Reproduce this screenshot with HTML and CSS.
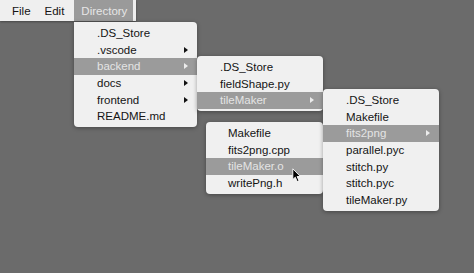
FILE: index.html
```html
<!DOCTYPE html>
<html>
<head>
<meta charset="utf-8">
<link rel="stylesheet" href="styles.css">
</head>
<body>
<div class="desk">
  <nav class="menubar">
    <div class="mb-item">File</div>
    <div class="mb-item">Edit</div>
    <div class="mb-item mb-active">Directory</div>
  </nav>

  <ul class="menu m1">
    <li class="item">.DS_Store</li>
    <li class="item sub">.vscode</li>
    <li class="item sub sel">backend</li>
    <li class="item sub">docs</li>
    <li class="item sub">frontend</li>
    <li class="item">README.md</li>
  </ul>

  <ul class="menu m2">
    <li class="item">.DS_Store</li>
    <li class="item">fieldShape.py</li>
    <li class="item sub sel">tileMaker</li>
  </ul>

  <ul class="menu m4">
    <li class="item">Makefile</li>
    <li class="item">fits2png.cpp</li>
    <li class="item sel">tileMaker.o</li>
    <li class="item">writePng.h</li>
  </ul>

  <ul class="menu m3">
    <li class="item">.DS_Store</li>
    <li class="item">Makefile</li>
    <li class="item sub sel">fits2png</li>
    <li class="item">parallel.pyc</li>
    <li class="item">stitch.py</li>
    <li class="item">stitch.pyc</li>
    <li class="item">tileMaker.py</li>
  </ul>

  <svg class="cursor" width="10" height="15" viewBox="0 0 10 15">
    <path d="M0.8 0.8 L0.8 11.5 L3.3 9.2 L5.2 13.6 L7 12.8 L5.1 8.5 L8.4 8.5 Z" fill="#000" stroke="#fff" stroke-width="0.9" stroke-linejoin="round"/>
  </svg>
</div>
</body>
</html>
```

FILE: styles.css
```css
* { box-sizing: border-box; }
html, body {
  margin: 0;
  padding: 0;
  background: #6b6b6b;
}
body {
  width: 474px;
  height: 273px;
  overflow: hidden;
  font-family: "Liberation Sans", Arial, sans-serif;
  font-size: 11.5px;
  color: #141414;
}
.desk {
  position: relative;
  width: 474px;
  height: 273px;
}
.menubar {
  display: flex;
  width: 136px;
  height: 21px;
  padding: 0 3px 0 5px;
  background: #efefef;
  box-shadow: 0 1px 2px rgba(0,0,0,0.35);
}
.mb-item {
  padding: 0 7px;
  line-height: 22px;
}
.mb-active {
  margin-left: 3px;
  padding: 0 6px 0 7px;
  background: #9a9a9a;
  color: #e6e6e6;
}
.menu {
  position: absolute;
  margin: 0;
  padding: 3px 0 2px;
  list-style: none;
  background: #f0f0f0;
  border-radius: 4px;
  box-shadow: 0 1px 4px rgba(0,0,0,0.35);
}
.item {
  position: relative;
  height: 16.667px;
  line-height: 16.667px;
  padding-left: 23px;
  white-space: nowrap;
}
.item.sel {
  background: #9b9b9b;
  color: #e4e4e4;
}
.item.sub::after {
  content: "";
  position: absolute;
  right: 9px;
  top: 5px;
  border-left: 4px solid #111;
  border-top: 3.5px solid transparent;
  border-bottom: 3.5px solid transparent;
}
.item.sub.sel::after {
  border-left-color: #ececec;
}
.m1 { left: 74px; top: 22px; width: 123px; border-top-left-radius: 0; border-top-right-radius: 4px; }
.m2 { left: 197px; top: 56px; width: 126px; }
.m3 { left: 323px; top: 89px; width: 116px; }
.m4 { left: 206px; top: 122px; width: 117px; padding-left: 0; }
.m4 .item { padding-left: 22px; }
.cursor {
  position: absolute;
  left: 292px;
  top: 168px;
}
```
